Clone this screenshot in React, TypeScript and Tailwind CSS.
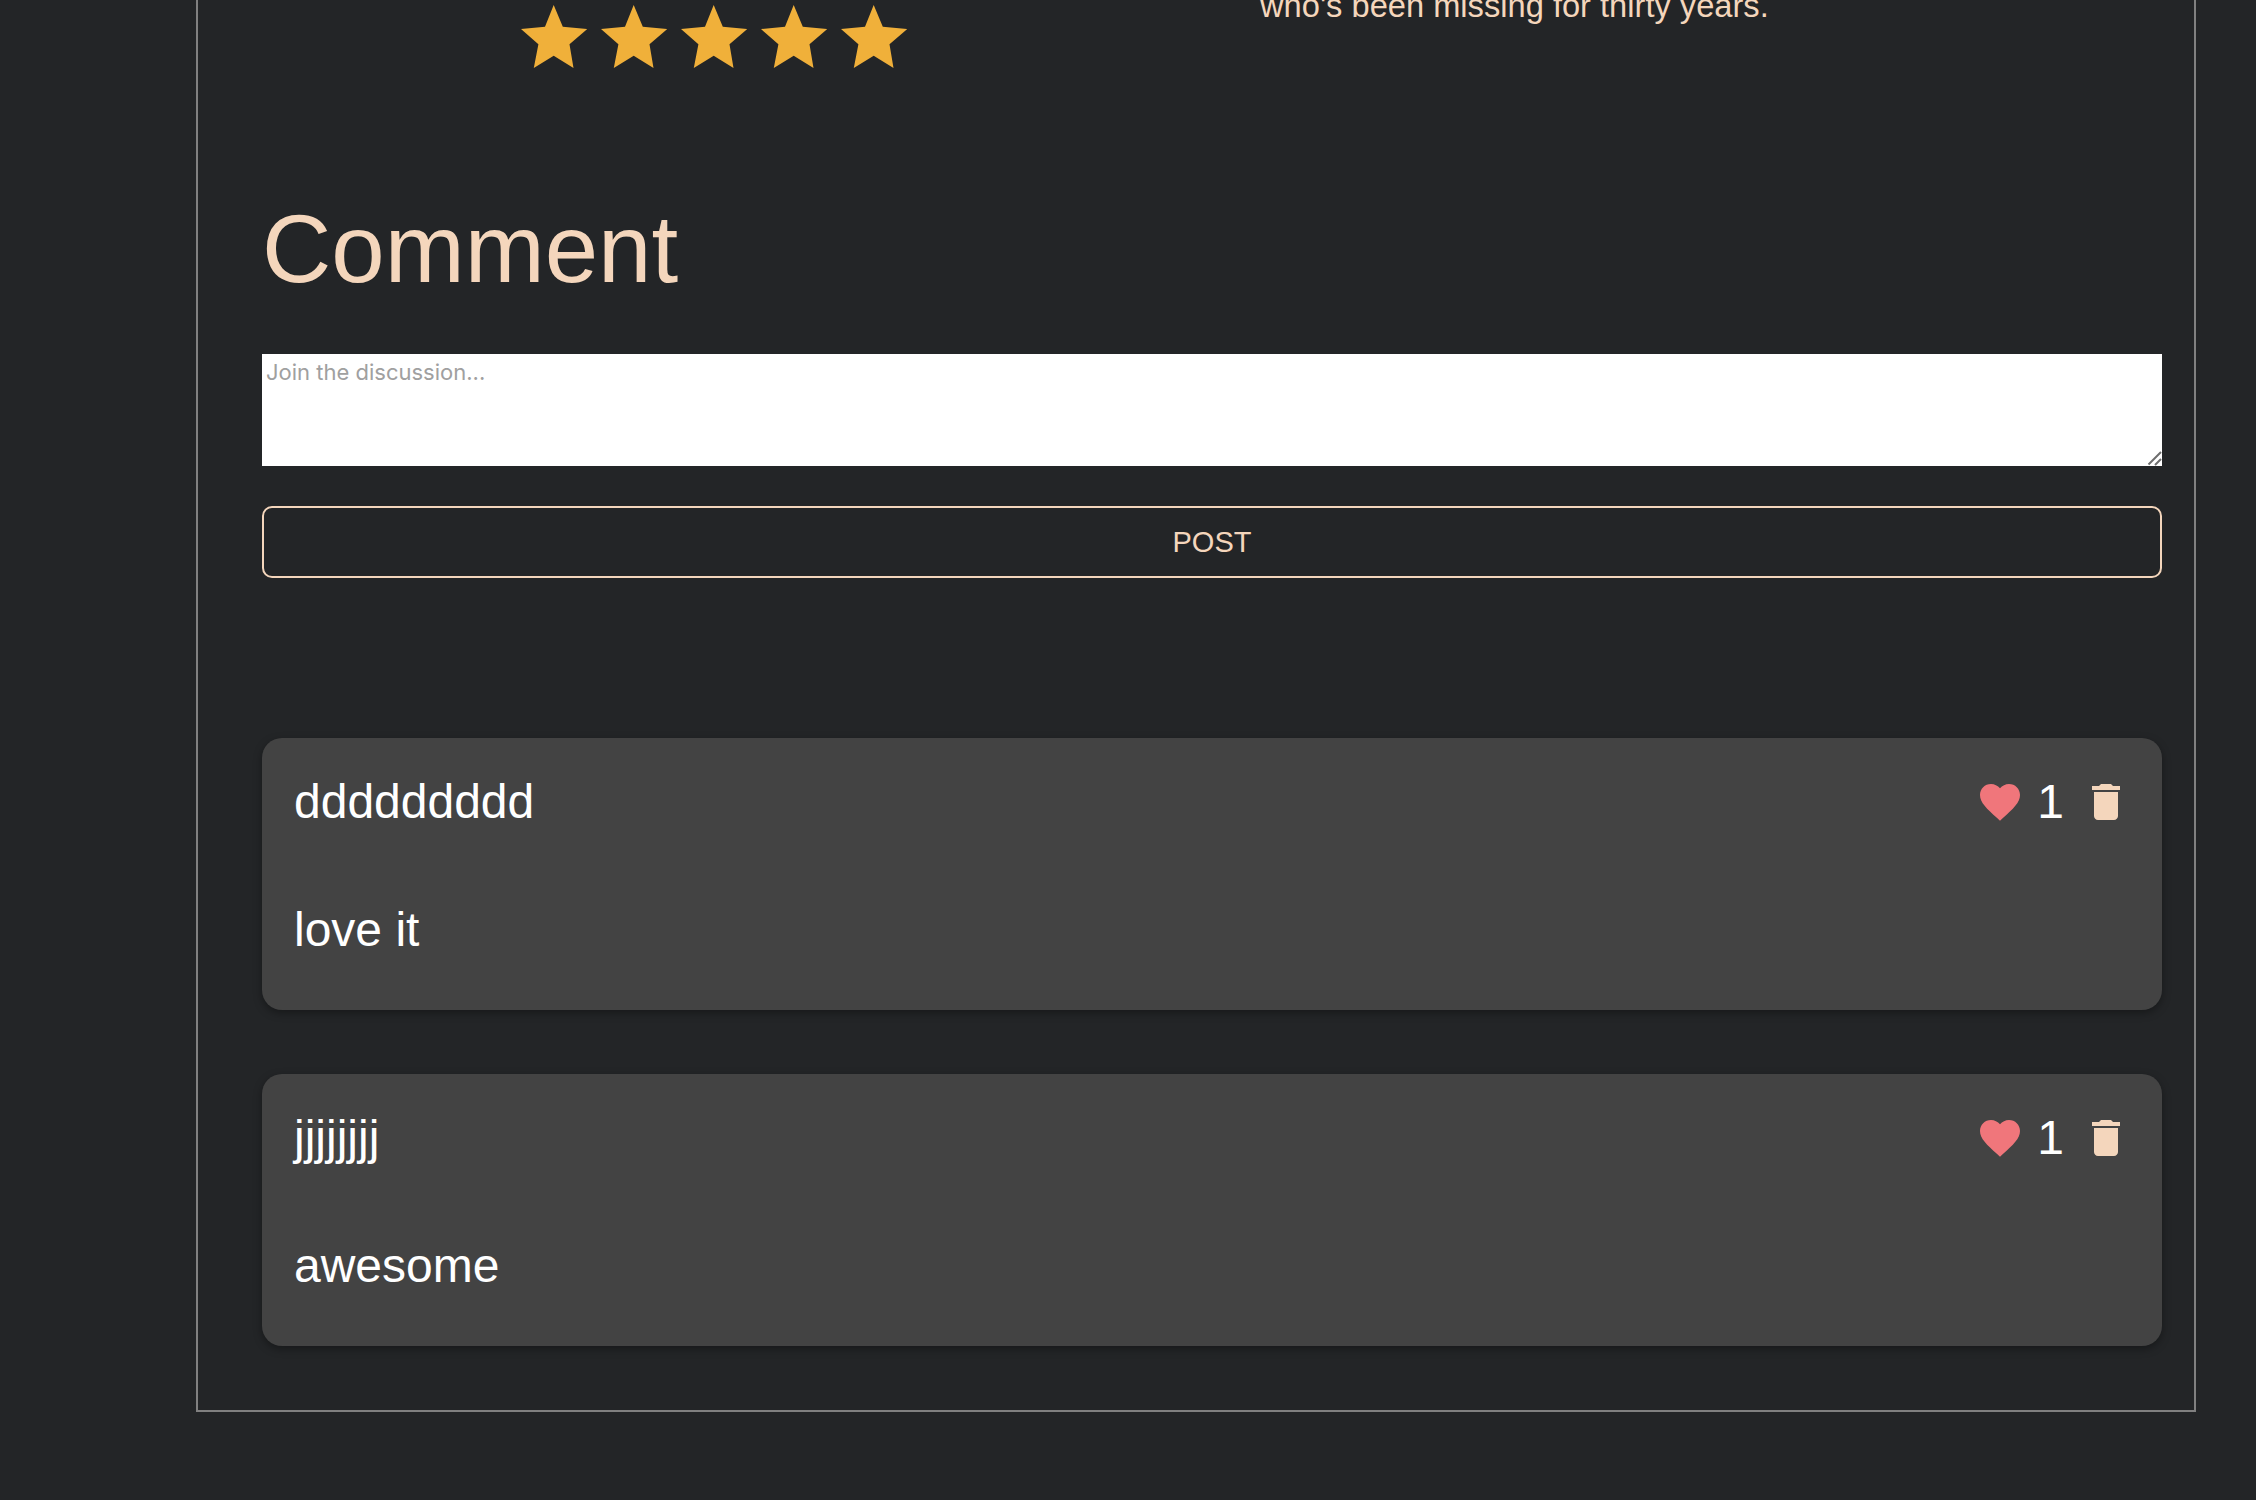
const font = { fontFamily: '"Liberation Sans", Arial, sans-serif' }

const comments = [
  { id: 1, user: 'ddddddddd', body: 'love it', likes: 1 },
  { id: 2, user: 'jjjjjjjj', body: 'awesome', likes: 1 },
]

const Star = () => (
  <svg viewBox="0 0 66.5 63" className="h-[63px] w-[66.5px] fill-[#f0b03a]">
    <polygon points="32.7,0 41.8,21.7 66.3,24 48.5,39.3 52.5,63 32.7,50.7 12.8,63 17.4,39.3 0,24 24,21.7" />
  </svg>
)

const Heart = () => (
  <svg viewBox="0 0 24 24" className="h-12 w-12 fill-[#f0767b]">
    <path d="M12 21.35l-1.45-1.32C5.4 15.36 2 12.28 2 8.5 2 5.42 4.42 3 7.5 3c1.74 0 3.41.81 4.5 2.09C13.09 3.81 14.76 3 16.5 3 19.58 3 22 5.42 22 8.5c0 3.78-3.4 6.86-8.55 11.54L12 21.35z" />
  </svg>
)

const Trash = () => (
  <svg viewBox="0 0 24 24" className="h-12 w-12 fill-[#f4d6bc]">
    <path d="M6 19c0 1.1.9 2 2 2h8c1.1 0 2-.9 2-2V7H6v12zM19 4h-3.5l-1-1h-5l-1 1H5v2h14V4z" />
  </svg>
)

const App = () => {
  return (
    <div className="h-[1500px] overflow-hidden bg-[#232527]" style={font}>
      <div className="ml-[196px] mt-[-13px] w-[2000px] border-x-2 border-b-2 border-[#808080] pb-16 pl-16 pr-8">
        {/* Movie info, only its bottom edge is in view */}
        <section className="grid grid-cols-[904px_1fr]">
          <div className="flex justify-center gap-[13.5px] pt-[18px]">
            {[1, 2, 3, 4, 5].map(n => (
              <Star key={n} />
            ))}
          </div>
          <p className="pl-[94px] text-[32.65px] leading-[37px] text-[#f4d6bc]">
            who's been missing for thirty years.
          </p>
        </section>

        {/* Comment form */}
        <h2 className="mt-[126px] text-[96px] leading-[110px] text-[#f4d6bc]">Comment</h2>
        <div className="relative mt-[50px]">
          <textarea
            placeholder="Join the discussion..."
            className="block h-[112px] w-full resize-none rounded-none bg-white px-1 pb-1 pt-[5px] text-[22px] leading-[26px] placeholder:text-[#a0a0a0]"
            style={{ fontFamily: 'Inter, sans-serif' }}
          />
          {/* resize grip */}
          <svg viewBox="0 0 16 16" className="absolute bottom-0 right-0 h-4 w-4 stroke-[#6e6e6e]" strokeWidth="2">
            <path d="M2.5 14.5 15 2M9 15 15 9" fill="none" />
          </svg>
        </div>
        <button className="mt-10 h-[72px] w-full rounded-[10px] border-2 border-[#f4d6bc] pt-[2px] text-[29px] uppercase text-[#f4d6bc]">
          Post
        </button>

        {/* Comment list */}
        <div className="mt-40 flex flex-col gap-16">
          {comments.map(({ id, user, body, likes }) => (
            <div
              key={id}
              className="rounded-[20px] bg-[#434343] px-8 pb-[53px] pt-8 text-[48px] leading-[55px] text-white shadow-[0_3px_8px_rgba(0,0,0,0.35)]"
            >
              <div className="flex h-16 items-center justify-between">
                <span className="mb-[2px]">{user}</span>
                <div className="flex items-center">
                  <Heart />
                  <span className="mb-[2px] ml-[13px] mr-[18px]">{likes}</span>
                  <Trash />
                </div>
              </div>
              <p className="mt-[68px]">{body}</p>
            </div>
          ))}
        </div>
      </div>
    </div>
  )
}

export default App
